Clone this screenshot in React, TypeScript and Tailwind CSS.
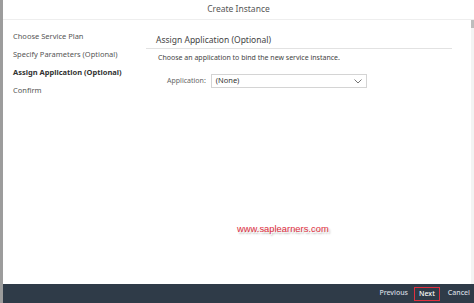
import React from "react";

export default function App() {
  return (
    <div
      className="w-[474px] h-[303px] flex bg-white overflow-hidden"
      style={{ fontFamily: '"Noto Sans", "Open Sans", sans-serif' }}
    >
      <div className="w-[3px] h-full bg-[#9c9c9c] shrink-0" />
      <div className="flex-1 flex flex-col min-w-0">
        <div className="h-[20px] flex items-center justify-center text-[8.5px] text-[#555] border-b border-[#eeeeee] shrink-0">
          Create Instance
        </div>
        <div className="flex-1 flex min-h-0">
          <div className="w-[143px] shrink-0 pl-[10px] pt-[11px] flex flex-col gap-[7px] text-[7.5px] text-[#555] leading-[11px]">
            <div>Choose Service Plan</div>
            <div>Specify Parameters (Optional)</div>
            <div className="font-bold text-[#333]">Assign Application (Optional)</div>
            <div>Confirm</div>
          </div>
          <div className="flex-1 flex flex-col pt-[14px] pr-[19px]">
            <div className="text-[8.5px] text-[#444] pl-[10px] pb-[2px] leading-[12px] border-b border-[#e2e2e2]">
              Assign Application (Optional)
            </div>
            <div className="text-[7px] text-[#444] pl-[12px] pt-[4px] leading-[10px]">
              Choose an application to bind the new service instance.
            </div>
            <div className="flex items-center pt-[11px] pl-[21px] gap-[5px]">
              <span className="text-[7px] text-[#666]">Application:</span>
              <div className="w-[156px] h-[14px] border border-[#d4d4d4] flex items-center justify-between px-[4px]">
                <span className="text-[7.5px] text-[#333]">(None)</span>
                <svg width="8" height="5" viewBox="0 0 8 5" fill="none">
                  <path d="M0.5 0.5 L4 4 L7.5 0.5" stroke="#666" strokeWidth="0.9" />
                </svg>
              </div>
            </div>
            <div className="flex-1 flex items-end pb-[48px] pl-[91px]">
              <span
                className="text-[9.4px] text-[#e0303f]"
                style={{ fontFamily: '"Liberation Sans", Arial, sans-serif', textShadow: "1px 1px 0 #fff, 1.5px 2px 2px rgba(0,0,0,0.35)" }}
              >
                www.saplearners.com
              </span>
            </div>
          </div>
          <div className="w-[3px] shrink-0 bg-[#f3f3f3] flex flex-col">
            <div className="h-[8px] bg-[#bdbdbd]" />
          </div>
        </div>
        <div className="h-[19px] bg-[#2f3b48] flex items-center justify-end pr-[4px] text-[7px] font-medium text-[#d6dbe0] shrink-0">
          <span>Previous</span>
          <span className="ml-[6px] px-[4px] py-[1px] border border-[#e0303f] text-white leading-[10px]">Next</span>
          <span className="ml-[8px]">Cancel</span>
        </div>
      </div>
    </div>
  );
}
